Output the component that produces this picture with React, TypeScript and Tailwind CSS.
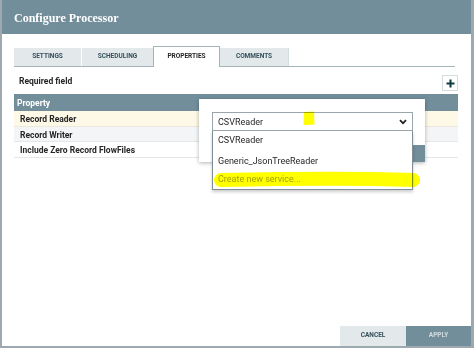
import React from "react";

export default function App() {
  const body = { fontFamily: "Roboto, 'Liberation Sans', sans-serif" };
  return (
    <div className="relative w-[474px] h-[348px] bg-[#9da9af] pl-[2px] pr-[3px] pb-[2px] flex flex-col overflow-hidden" style={body}>
      <div className="flex-1 flex flex-col bg-white">
        <div className="h-[34px] bg-[#728e9b] flex items-center pl-[12px] pt-[2px]">
          <span
            className="text-white font-bold text-[12px]"
            style={{ fontFamily: "'Liberation Serif', serif" }}
          >
            Configure Processor
          </span>
        </div>
        <div className="flex-1 flex flex-col pt-[13px]">
          <div className="pl-[12px] pr-[13px]">
            <div className="flex items-end h-[20px] border-b border-[#a5b4bb] mr-[3px]">
              <div className="w-[68px] h-[18px] bg-[#e3e8eb] border-r border-white flex items-center justify-center text-[6.5px] font-bold text-[#35505b]">SETTINGS</div>
              <div className="w-[71px] h-[18px] bg-[#e3e8eb] flex items-center justify-center text-[6.5px] font-bold text-[#35505b]">SCHEDULING</div>
              <div className="w-[67px] h-[21px] -mb-px bg-white border border-b-0 border-[#a5b4bb] flex items-center justify-center text-[6.5px] font-bold text-[#262626]">PROPERTIES</div>
              <div className="w-[69px] h-[18px] bg-[#e3e8eb] border-r border-[#d6dde0] flex items-center justify-center text-[6.5px] font-bold text-[#35505b]">COMMENTS</div>
            </div>
            <div className="h-[27px] flex items-start justify-between">
              <span className="pl-[5px] pt-[9px] text-[8.5px] leading-[10px] font-bold text-[#262626]">Required field</span>
              <div className="mt-[8px] w-[16px] h-[16px] border border-[#d4dcdf] bg-white flex items-center justify-center">
                <svg width="9" height="9" viewBox="0 0 9 9">
                  <path d="M4.5 0.5V8.5M0.5 4.5H8.5" stroke="#0d3b3f" strokeWidth="2" />
                </svg>
              </div>
            </div>
            <div className="flex flex-col">
              <div className="h-[17px] bg-[#728e9b] flex items-center pl-[3px] pt-[2px] text-[8.5px] font-bold text-white">Property</div>
              <div className="h-[16px] bg-[#fef8e6] border-b border-[#ece8dc] flex items-center pl-[6px] pt-[1px] text-[8.5px] font-bold text-[#262626]">Record Reader</div>
              <div className="h-[15px] bg-[#f3f5f6] border-b border-[#e3e7e9] flex items-center pl-[6px] pt-[2px] text-[8.5px] font-bold text-[#262626]">Record Writer</div>
              <div className="h-[16px] bg-white border-b border-[#e3e7e9] flex items-center pl-[6px] pt-[2px] text-[8.5px] font-bold text-[#262626]">Include Zero Record FlowFiles</div>
            </div>
          </div>
          <div className="mt-auto flex justify-end">
            <div className="w-[66px] h-[20px] bg-[#e3e8eb] flex items-center justify-center text-[6.5px] font-bold text-[#35505b]">CANCEL</div>
            <div className="w-[65px] h-[20px] bg-[#728e9b] flex items-center justify-center text-[6.5px] font-bold text-[#d3dde1]">APPLY</div>
          </div>
        </div>
      </div>

      {/* popup editor */}
      <div className="absolute left-[199px] top-[99px] w-[226px] h-[63px] bg-white shadow-[0_1px_4px_rgba(0,0,0,0.3)]">
        <div className="absolute right-0 bottom-0 w-[15px] h-[17px] bg-[#728e9b]" />
      </div>

      {/* combo */}
      <div className="absolute left-[212px] top-[112px] w-[201px] flex flex-col">
        <div className="h-[19px] border border-[#9aa6ac] bg-white flex items-center justify-between pl-[5px] pr-[5px] pt-[2px] text-[9px] text-[#262626]">
          <span>CSVReader</span>
          <svg width="8" height="6" viewBox="0 0 8 6" className="-mt-[2px]">
            <path d="M1 1.2L4 4.3L7 1.2" fill="none" stroke="#1f1f1f" strokeWidth="1.8" />
          </svg>
        </div>
        <div className="h-[59px] border border-t-0 border-[#7f8e96] bg-white shadow-[0_2px_3px_rgba(0,0,0,0.2)] flex flex-col text-[9px]">
          <div className="h-[19.5px] flex items-center pl-[5px] pt-[1px] text-[#262626]">CSVReader</div>
          <div className="h-[20px] flex items-center pl-[5px] pt-[3px] text-[#262626]">Generic_JsonTreeReader</div>
          <div className="h-[19.5px] flex items-center pl-[5px] pt-[1px] text-[#a3a3a3]">Create new service...</div>
        </div>
      </div>

      {/* highlighter marks */}
      <svg className="absolute left-[212px] top-[168px] mix-blend-multiply" width="212" height="24" viewBox="0 0 212 24">
        <path d="M9 12 C 60 11, 140 10, 201 12" fill="none" stroke="#ffff00" strokeWidth="14" strokeLinecap="round" />
      </svg>
      <svg className="absolute left-[302px] top-[110px] mix-blend-multiply" width="14" height="16" viewBox="0 0 14 16">
        <path d="M2 2 L12 1.5 L12.5 14.5 L1.5 15 Z" fill="#ffff00" />
      </svg>
    </div>
  );
}
